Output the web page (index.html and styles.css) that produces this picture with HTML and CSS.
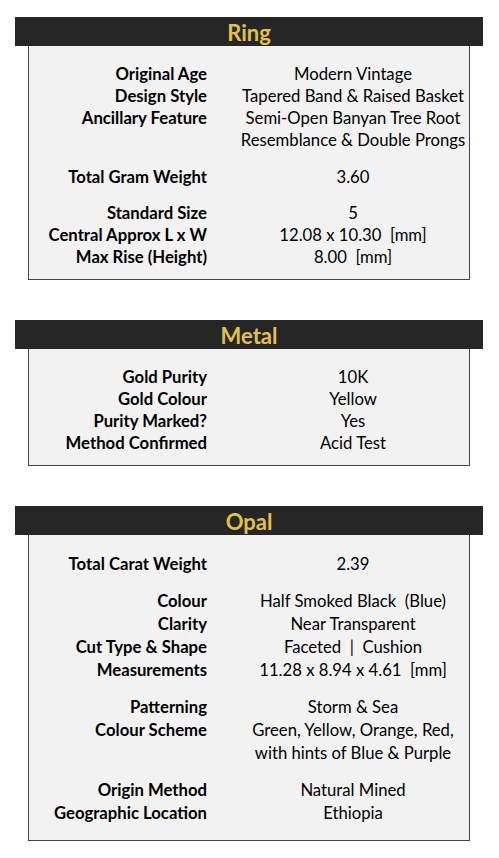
FILE: index.html
```html
<!DOCTYPE html>
<html>
<head>
<meta charset="utf-8">
<link rel="stylesheet" href="styles.css">
</head>
<body>
<section class="card">
  <h2 class="card-title">Ring</h2>
  <div class="card-body">
    <div class="row"><span class="label">Original Age</span><span class="value">Modern Vintage</span></div>
    <div class="row"><span class="label">Design Style</span><span class="value">Tapered Band &amp; Raised Basket</span></div>
    <div class="row"><span class="label">Ancillary Feature</span><span class="value">Semi-Open Banyan Tree Root</span></div>
    <div class="row"><span class="label"></span><span class="value">Resemblance &amp; Double Prongs</span></div>
    <div class="spacer"></div>
    <div class="row"><span class="label">Total Gram Weight</span><span class="value">3.60</span></div>
    <div class="spacer"></div>
    <div class="row"><span class="label">Standard Size</span><span class="value">5</span></div>
    <div class="row"><span class="label">Central Approx L x W</span><span class="value">12.08 x 10.30&nbsp; [mm]</span></div>
    <div class="row"><span class="label">Max Rise (Height)</span><span class="value">8.00&nbsp; [mm]</span></div>
  </div>
</section>

<section class="card">
  <h2 class="card-title">Metal</h2>
  <div class="card-body">
    <div class="row"><span class="label">Gold Purity</span><span class="value">10K</span></div>
    <div class="row"><span class="label">Gold Colour</span><span class="value">Yellow</span></div>
    <div class="row"><span class="label">Purity Marked?</span><span class="value">Yes</span></div>
    <div class="row"><span class="label">Method Confirmed</span><span class="value">Acid Test</span></div>
  </div>
</section>

<section class="card card-tall">
  <h2 class="card-title">Opal</h2>
  <div class="card-body">
    <div class="row"><span class="label">Total Carat Weight</span><span class="value">2.39</span></div>
    <div class="spacer"></div>
    <div class="row"><span class="label">Colour</span><span class="value">Half Smoked Black&nbsp; (Blue)</span></div>
    <div class="row"><span class="label">Clarity</span><span class="value">Near Transparent</span></div>
    <div class="row"><span class="label">Cut Type &amp; Shape</span><span class="value">Faceted&nbsp; |&nbsp; Cushion</span></div>
    <div class="row"><span class="label">Measurements</span><span class="value">11.28 x 8.94 x 4.61&nbsp; [mm]</span></div>
    <div class="spacer"></div>
    <div class="row"><span class="label">Patterning</span><span class="value">Storm &amp; Sea</span></div>
    <div class="row"><span class="label">Colour Scheme</span><span class="value">Green, Yellow, Orange, Red,</span></div>
    <div class="row"><span class="label"></span><span class="value">with hints of Blue &amp; Purple</span></div>
    <div class="spacer"></div>
    <div class="row"><span class="label">Origin Method</span><span class="value">Natural Mined</span></div>
    <div class="row"><span class="label">Geographic Location</span><span class="value">Ethiopia</span></div>
  </div>
</section>
</body>
</html>
```

FILE: styles.css
```css
html, body {
  margin: 0;
  padding: 0;
  background: #ffffff;
}

body {
  padding-top: 17px;
  font-family: Lato, "Open Sans", sans-serif;
  color: #000000;
}

.card {
  margin: 0 16px 40px 15px;
  width: 468px;
}

.card-title {
  margin: 0;
  height: 29px;
  line-height: 31px;
  background: #262626;
  color: #e2c14b;
  text-align: center;
  font-size: 22px;
  font-weight: 700;
}

.card-body {
  margin: 0 13px;
  background: #f2f2f2;
  border: 1.5px solid #454545;
  border-top: none;
  padding: 17px 0 11px;
}

.row {
  display: grid;
  grid-template-columns: 178px 1fr;
  column-gap: 30px;
  height: 22px;
  line-height: 23px;
  font-size: 16.7px;
}

.card-tall .card-body {
  padding: 17px 0 16px;
}

.card-tall .row {
  height: 23px;
  line-height: 25px;
}

.label {
  text-align: right;
  font-weight: 700;
  white-space: nowrap;
}

.value {
  text-align: center;
  white-space: nowrap;
}

.spacer {
  height: 14.5px;
}

.card-tall .spacer {
  height: 14px;
}
```
